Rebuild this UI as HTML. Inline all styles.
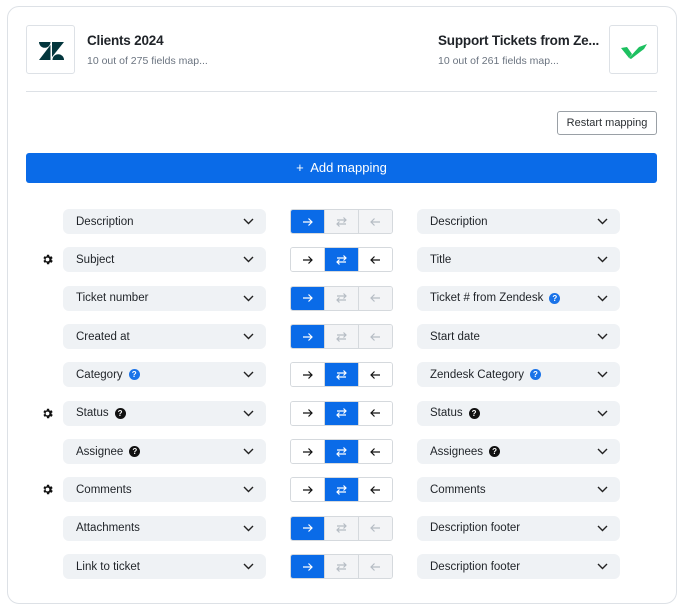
<!DOCTYPE html><html><head><style>
*{box-sizing:border-box;margin:0;padding:0}
body{width:683px;height:609px;background:#fff;font-family:"Liberation Sans",sans-serif;position:relative;overflow:hidden;color:#1f2328}
.card{position:absolute;left:7px;top:6px;width:670px;height:598px;border:1px solid #dde1e6;border-radius:12px}
.logo{position:absolute;width:49px;height:49px;border:1px solid #dde1e6;border-radius:3px;top:25px}
.t{position:absolute;font-weight:bold;font-size:13.5px;top:33px;letter-spacing:-0.2px;white-space:nowrap}
.s{position:absolute;font-size:10.5px;color:#6b7480;top:55px}
.div{position:absolute;left:26px;width:631px;top:91px;height:1px;background:#dde1e6}
.rb{position:absolute;left:557px;top:111px;width:100px;height:24px;border:1px solid #9aa0a6;border-radius:3px;font-size:11px;text-align:center;line-height:22px;color:#2b2f33}
.add{position:absolute;left:26px;top:153px;width:631px;height:30px;background:#0a6be8;border-radius:3px;color:#fff;font-size:13px;text-align:center;line-height:30px}
.row{position:absolute;left:0;width:683px;height:25px}
.dd{position:absolute;top:0;height:25px;width:203px;background:#eff2f5;border-radius:6px;font-size:11.5px;padding-left:13px;display:flex;align-items:center}
.dd svg.ch{position:absolute;right:12px;top:9px}
.tg{position:absolute;left:290px;top:0;width:103px;height:25px;border:1px solid #d5d9dd;border-radius:3px;display:flex;overflow:hidden}
.tg div{flex:1;display:flex;align-items:center;justify-content:center}
.tg div+div{border-left:1px solid #d5d9dd}
.on{background:#0a6be8;color:#fff}
.dis{background:#f3f4f6;color:#b5bcc4}
.wh{background:#fff;color:#111}
.q{display:inline-block;width:11px;height:11px;border-radius:50%;color:#fff;font-size:8px;line-height:11px;text-align:center;font-weight:bold;margin-left:6px}
.qb{background:#1a73e8}.qk{background:#111}
.gear{position:absolute;left:41px;top:6px}
</style></head><body>
<div class="card"></div>
<div class="logo" style="left:26px"><svg width="49" height="49" viewBox="0 0 49 49"><path d="M12 16h11.5a5.75 5.75 0 0 1-11.5 0z" fill="#03363d"/><path d="M25 16h12L25 31z" fill="#03363d"/><path d="M12 34h11.5V19z" fill="#03363d"/><path d="M25.5 34a5.75 5.75 0 0 1 11.5 0z" fill="#03363d"/></svg></div>
<div class="t" style="left:87px">Clients 2024</div>
<div class="s" style="left:87px">10 out of 275 fields map...</div>
<div class="t" style="left:438px">Support Tickets from Ze...</div>
<div class="s" style="left:438px">10 out of 261 fields map...</div>
<div class="logo" style="left:609px"><svg width="49" height="49" viewBox="0 0 49 49"><path d="M11 22l6-1 5 7-3 4z" fill="#1dc060"/><path d="M19 32l10-11 8-3-3 5-13 10z" fill="#1dc060"/></svg></div>
<div class="div"></div>
<div class="rb">Restart mapping</div>
<div class="add">+&nbsp; Add mapping</div>
<div id="rows"></div>
<script>
var R=[["Description","",0,"Description","",0],["Subject","",1,"Title","",1],["Ticket number","",0,"Ticket # from Zendesk","b",0],["Created at","",0,"Start date","",0],["Category","b",1,"Zendesk Category","b",0],["Status","k",1,"Status","k",1],["Assignee","k",1,"Assignees","k",0],["Comments","",1,"Comments","",1],["Attachments","",0,"Description footer","",0],["Link to ticket","",0,"Description footer","",0]];
var ch='<svg class="ch" width="11" height="7" viewBox="0 0 11 7"><path d="M1 1l4.5 4.5L10 1" stroke="#222" stroke-width="1.4" fill="none"/></svg>';
var gear='<svg class="gear" width="13" height="13" viewBox="0 0 24 24"><path fill="#111" d="M19.4 13a7.5 7.5 0 0 0 0-2l2.1-1.6-2-3.5-2.5 1a7 7 0 0 0-1.7-1L15 3.2h-4l-.4 2.7a7 7 0 0 0-1.7 1l-2.5-1-2 3.5L6.6 11a7.5 7.5 0 0 0 0 2l-2.1 1.6 2 3.5 2.5-1a7 7 0 0 0 1.700 1l.4 2.7h4l.4-2.7a7 7 0 0 0 1.7-1l2.5 1 2-3.5zM12 15.5a3.5 3.5 0 1 1 0-7 3.5 3.5 0 0 1 0 7z"/></svg>';
function ar(c,d){var p=d=='r'?'M2 6h9M7.5 2.5L11 6 7.5 9.5':d=='l'?'M11 6H2M5.5 2.5L2 6l3.5 3.5':'M2 4h9M8.5 1.5L11 4 8.5 6.5M11 8H2M4.5 5.5L2 8l2.5 2.5';return '<svg width="13" height="12" viewBox="0 0 13 12"><path d="'+p+'" stroke="'+c+'" stroke-width="1.2" fill="none"/></svg>'}
var h='';
R.forEach(function(r,i){
var top=209+i*38.35;
var q=function(c){return c?'<span class="q q'+c+'">?</span>':''};
var g=(i==1||i==5||i==7)?gear:'';
var tg=r[2]?'<div class="wh">'+ar('#111','r')+'</div><div class="on">'+ar('#fff','b')+'</div><div class="wh">'+ar('#111','l')+'</div>':'<div class="on">'+ar('#fff','r')+'</div><div class="dis">'+ar('#b5bcc4','b')+'</div><div class="dis">'+ar('#b5bcc4','l')+'</div>';
h+='<div class="row" style="top:'+top+'px">'+g+'<div class="dd" style="left:63px">'+r[0]+q(r[1])+ch+'</div><div class="tg">'+tg+'</div><div class="dd" style="left:417px">'+r[3]+q(r[4])+ch+'</div></div>';
});
document.getElementById('rows').innerHTML=h;
</script>
</body></html>
